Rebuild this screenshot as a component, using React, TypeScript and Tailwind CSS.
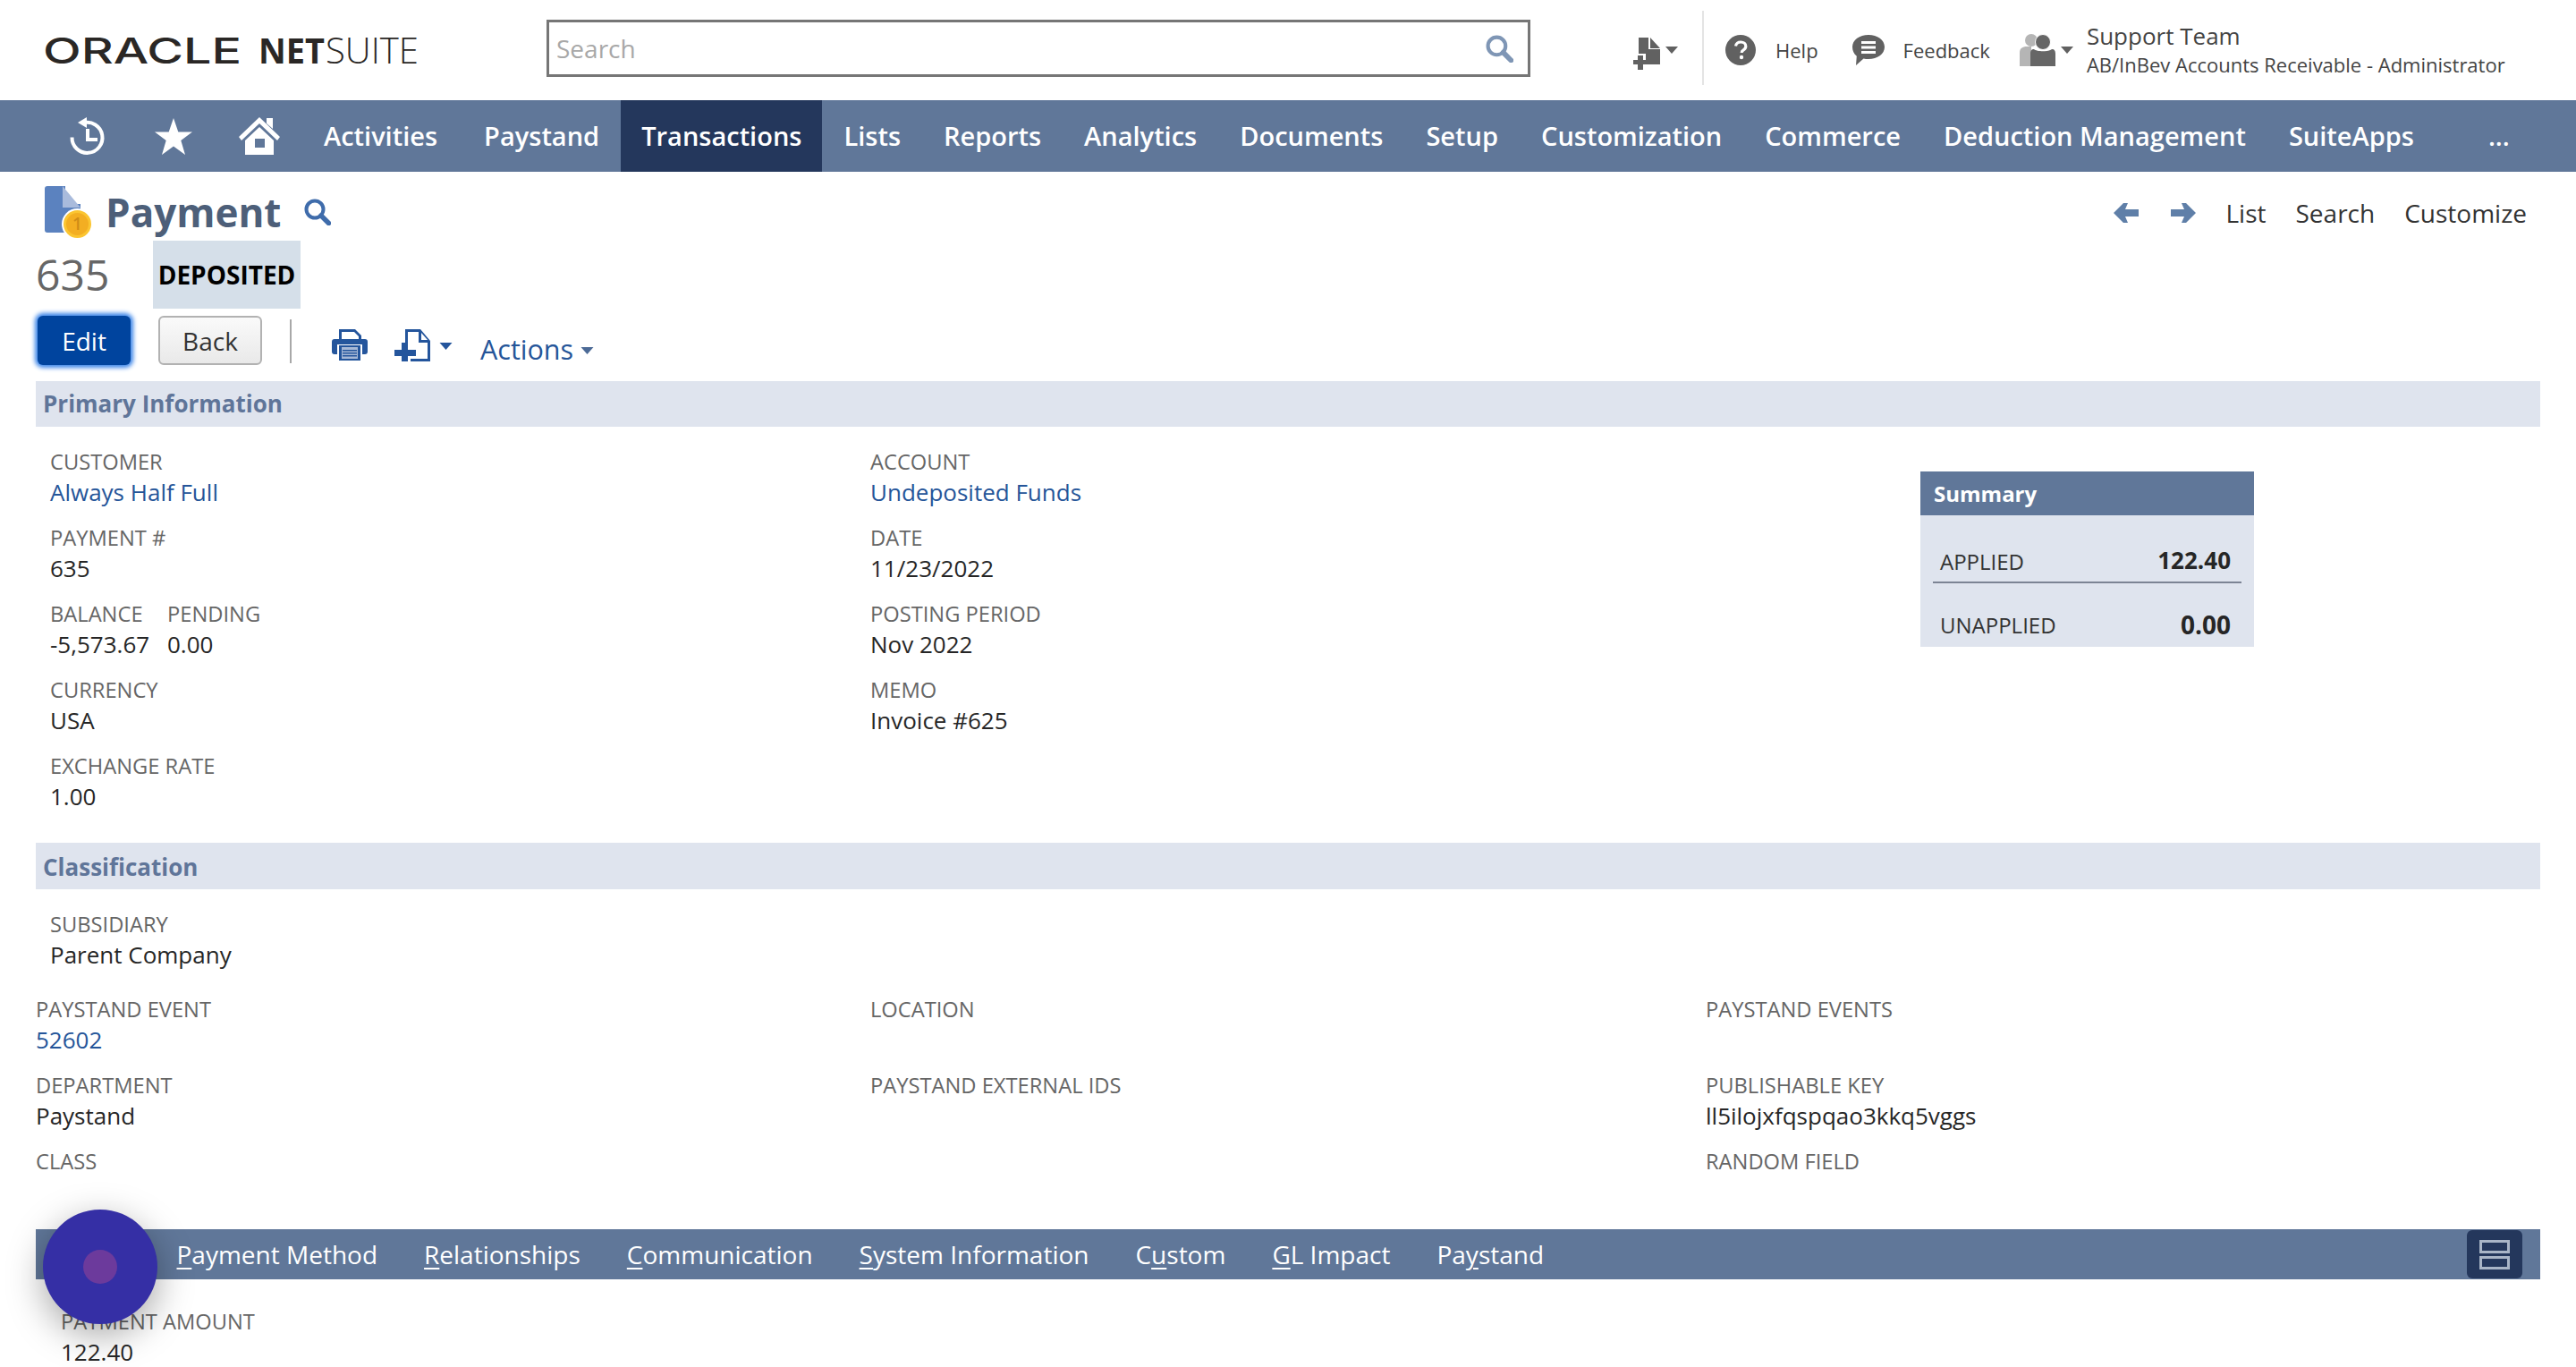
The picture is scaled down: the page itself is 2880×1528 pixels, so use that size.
import type { ReactNode } from "react";

const navItems = ["Lists", "Reports", "Analytics", "Documents", "Setup", "Customization", "Commerce", "Deduction Management", "SuiteApps"];

const tabs: [string, string, string][] = [
  ["", "P", "ayment Method"],
  ["", "R", "elationships"],
  ["", "C", "ommunication"],
  ["", "S", "ystem Information"],
  ["C", "u", "stom"],
  ["", "G", "L Impact"],
  ["Pa", "y", "stand"],
];

function Caret({ className }: { className: string }) {
  return (
    <svg viewBox="0 0 14 8" className={className} fill="currentColor">
      <path d="M0 0h14L7 8z" />
    </svg>
  );
}

function Field({ label, children, className = "" }: { label: string; children?: ReactNode; className?: string }) {
  return (
    <div className={`h-[85px] ${className}`}>
      <div className="text-[23.7px] leading-[34px] text-[#666666]">{label}</div>
      <div className="text-[26px] leading-[35px] text-[#262626]">{children}</div>
    </div>
  );
}

function FieldLink({ children }: { children: ReactNode }) {
  return <span className="text-[#255599]">{children}</span>;
}

function SectionBar({ title, className }: { title: string; className: string }) {
  return (
    <div className={`flex items-center bg-[#dfe4ee] pl-2 text-[26px] font-bold text-[#5f7599] ${className}`}>{title}</div>
  );
}

function Logo() {
  return (
    <svg viewBox="0 0 424 50" className="ml-[46px] h-[50px] w-[424px] shrink-0 overflow-visible" fill="#2a2725">
      <text x="2" y="40" fontFamily="Inter, sans-serif" fontSize="40" fontWeight="500" textLength="222" lengthAdjust="spacingAndGlyphs">
        ORACLE
      </text>
      <text x="243" y="40" fontFamily="'Open Sans', sans-serif" fontSize="40" fontWeight="700" textLength="74" lengthAdjust="spacingAndGlyphs">
        NET
      </text>
      <text x="318" y="40" fontFamily="'Open Sans', sans-serif" fontSize="40" fontWeight="300" textLength="104" lengthAdjust="spacingAndGlyphs">
        SUITE
      </text>
    </svg>
  );
}

function HeaderNewIcon() {
  return (
    <svg viewBox="0 0 31 36" className="h-[36px] w-[31px]" fill="#616161">
      <path d="M6 0h11v13H6z" />
      <path d="M19 0l11 12H19z" />
      <path d="M6 13h24v17H6z" />
      <rect x="0" y="18" width="14" height="18" fill="#fff" />
      <rect x="0" y="25" width="16" height="5" />
      <rect x="5" y="20" width="6" height="16" />
    </svg>
  );
}

function HelpIcon() {
  return (
    <svg viewBox="0 0 34 34" className="h-[34px] w-[34px]">
      <circle cx="17" cy="17" r="17" fill="#616161" />
      <path d="M11.500 12.500c.6-3 2.800-4.500 5.700-4.500 3.200 0 5.600 1.900 5.600 4.700 0 2.200-1.200 3.300-2.900 4.400-1.300.8-1.700 1.400-1.700 2.900" fill="none" stroke="#fff" strokeWidth="3.200" />
      <circle cx="18" cy="25" r="2.200" fill="#fff" />
    </svg>
  );
}

function FeedbackIcon() {
  return (
    <svg viewBox="0 0 36 34" className="h-[34px] w-[36px]">
      <path d="M18 0c10 0 18 5.700 18 13.500S28 27 18 27c-2 0-4-.2-5.500-.6L4 34l.8-10.300C1.800 21.200 0 17.600 0 13.500 0 5.700 8 0 18 0z" fill="#616161" />
      <path d="M10 7h16v3H10zM10 12.500h16v3H10zM10 18h16v3H10z" fill="#fff" />
    </svg>
  );
}

function TeamIcon() {
  return (
    <svg viewBox="0 0 40 36" className="h-[36px] w-[40px]">
      <circle cx="13" cy="7" r="7" fill="#b5b5b5" />
      <path d="M0 36V21c0-5 3-7 8-7h5v22z" fill="#b5b5b5" />
      <circle cx="26" cy="9" r="8.500" fill="#666666" stroke="#fff" strokeWidth="1" />
      <path d="M12 36V22c0-3 1-5 4-5 3 3 17 3 20 0 3 0 4 2 4 5v14z" fill="#666666" />
    </svg>
  );
}

function HistoryIcon() {
  return (
    <svg viewBox="0 0 40 43" className="h-[43px] w-[40px]" fill="none" stroke="#fff">
      <path d="M15 6.500a17 17 0 1 1-12.500 16" strokeWidth="4" />
      <path d="M19 0v12L9 6z" fill="#fff" stroke="none" />
      <path d="M20 13v12h11" strokeWidth="4" />
    </svg>
  );
}

function StarIcon() {
  return (
    <svg viewBox="0 0 42 41" className="h-[41px] w-[42px]" fill="#fff">
      <path d="M21 0l5.300 15.400H42L29.300 25.100 34 41 21 31.400 8 41l4.700-15.900L0 15.400h15.700z" />
    </svg>
  );
}

function HomeIcon() {
  return (
    <svg viewBox="0 0 46 42" className="h-[42px] w-[46px]" fill="#fff">
      <path d="M31 1h7v12l-7-6z" />
      <path d="M23 0l23 22-3 4L23 7 3 26l-3-4z" />
      <path fillRule="evenodd" d="M23 11l16 15v16H7V26zM18 24v10h11V24z" />
    </svg>
  );
}

function SearchGlass({ className, color }: { className: string; color: string }) {
  return (
    <svg viewBox="0 0 30 30" className={className} fill="none" stroke={color}>
      <circle cx="12" cy="12" r="9.500" strokeWidth="4" />
      <path d="M19 19l8.500 8.500" strokeWidth="5.500" strokeLinecap="round" />
    </svg>
  );
}

function PageIcon() {
  return (
    <div className="relative ml-[10px] h-[58px] w-[52px] shrink-0">
      <svg viewBox="0 0 40 52" className="h-[52px] w-[40px]">
        <path d="M3 0h20v20h17v29a3 3 0 0 1-3 3H3a3 3 0 0 1-3-3V3a3 3 0 0 1 3-3z" fill="#5b82bf" />
        <path d="M20 0l20 24H20z" fill="#a9bbdc" />
      </svg>
      <div className="absolute left-[21px] top-[27px] flex h-[31px] w-[31px] items-center justify-center rounded-full border-[3px] border-[#fbc531] bg-[#f3ae22] text-[19px] font-semibold leading-none text-[#cf8c17] ring-2 ring-white">
        1
      </div>
    </div>
  );
}

function PrintIcon() {
  return (
    <svg viewBox="0 0 40 35" className="h-[35px] w-[40px]" fill="#24559c">
      <path d="M8 0h18l7 7v7H8zM11 3v9h19V8l-5-5z" fillRule="evenodd" />
      <path d="M3 11h34a3 3 0 0 1 3 3v11a3 3 0 0 1-3 3h-3V17H6v11H3a3 3 0 0 1-3-3V14a3 3 0 0 1 3-3z" />
      <path d="M8 18h24v17H8z" />
      <path d="M11 20h18v13H11z" fill="#a6b8d6" />
      <path d="M12 23h16v1.500H12zM12 26h16v1.500H12zM12 29h16v1.500H12z" fill="#24559c" />
    </svg>
  );
}

function NewIcon() {
  return (
    <svg viewBox="0 0 40 36" className="h-[36px] w-[40px]" fill="#24559c">
      <path d="M12 0h17l11 13v23H18v-3h19V15H27V3H15v13h-3zM30 4v8h7z" fillRule="evenodd" />
      <path d="M8 15h7v8h9v7h-9v6H8v-6H0v-7h8z" />
    </svg>
  );
}

export default function App() {
  return (
    <div className="relative h-[1528px] w-[2880px] overflow-hidden bg-white font-['Open_Sans',sans-serif] text-[#333333]">
      <header className="flex h-[112px] items-center">
        <Logo />
        <div className="mb-[4px] ml-[141px] flex h-[64px] w-[1100px] shrink-0 items-center border-[3px] border-[#767676] pl-[8px] pr-[16px]">
          <span className="flex-1 text-[28px] text-[#a8a8a8]">Search</span>
          <SearchGlass className="h-[31px] w-[31px]" color="#7f96b5" />
        </div>
        <div className="ml-[115px] mt-[8px] flex items-center">
          <HeaderNewIcon />
          <Caret className="mb-[8px] ml-[5px] h-[8px] w-[14px] text-[#616161]" />
        </div>
        <div className="mb-[6px] ml-[27px] h-[83px] w-[2px] bg-[#e4e4e4]" />
        <div className="ml-[24px]">
          <HelpIcon />
        </div>
        <span className="ml-[22px] text-[22px] text-[#444444]">Help</span>
        <div className="ml-[38px]">
          <FeedbackIcon />
        </div>
        <span className="ml-[21px] text-[22px] text-[#444444]">Feedback</span>
        <div className="ml-[33px]">
          <TeamIcon />
        </div>
        <Caret className="ml-[6px] h-[8px] w-[14px] text-[#616161]" />
        <div className="ml-[15px] flex flex-col">
          <span className="text-[26px] leading-[32px] text-[#444444]">Support Team</span>
          <span className="text-[22px] leading-[32px] text-[#444444]">AB/InBev Accounts Receivable - Administrator</span>
        </div>
      </header>

      <nav className="flex h-[80px] items-center bg-[#607799] text-[29px] font-semibold text-white">
        <div className="ml-[78px]">
          <HistoryIcon />
        </div>
        <div className="ml-[55px]">
          <StarIcon />
        </div>
        <div className="ml-[52px]">
          <HomeIcon />
        </div>
        <span className="ml-[25px] pl-[24px] pr-[28px]">Activities</span>
        <span className="px-[24px]">Paystand</span>
        <span className="flex h-full items-center bg-[#24375c] px-[23px]">Transactions</span>
        {navItems.map((item) => (
          <span key={item} className="px-[24px]">
            {item}
          </span>
        ))}
        <span className="ml-[59px]">...</span>
      </nav>

      <main className="px-[40px]">
        <div className="flex h-[77px] items-center justify-between pt-[12px]">
          <div className="flex items-center">
            <PageIcon />
            <span className="ml-[16px] text-[44px] font-bold text-[#4d5f79]">Payment</span>
            <SearchGlass className="ml-[26px] h-[30px] w-[30px]" color="#3f6cab" />
          </div>
          <div className="mt-[3px] flex items-center pr-[15px] text-[28px]">
            <svg viewBox="0 0 29 24" className="h-[24px] w-[29px]" fill="#5f7fa8">
              <path d="M12 1h5l-3 7h15v8H14l3 7h-5L1 12z" />
            </svg>
            <svg viewBox="0 0 29 24" className="ml-[36px] h-[24px] w-[29px]" fill="#5f7fa8">
              <path d="M17 1h-5l3 7H0v8h15l-3 7h5l11-11z" />
            </svg>
            <span className="ml-[32px]">List</span>
            <span className="ml-[33px]">Search</span>
            <span className="ml-[33px]">Customize</span>
          </div>
        </div>

        <div className="flex h-[76px] items-center">
          <span className="w-[131px] text-[48px] leading-none text-[#666666]">635</span>
          <span className="flex h-full w-[165px] items-center justify-center bg-[#d5dfe9] text-[28px] font-bold text-black">
            DEPOSITED
          </span>
        </div>

        <div className="flex h-[81px] pl-[2px] pt-[8px]">
          <button className="h-[55px] w-[104px] rounded-[6px] bg-[#00449e] text-[28px] font-medium text-white shadow-[0_0_5px_3px_#3a84e8]">
            Edit
          </button>
          <button className="ml-[31px] h-[55px] w-[116px] rounded-[6px] border-2 border-[#b2b2b2] bg-gradient-to-b from-[#fafafa] to-[#e9e9e9] text-[28px] text-[#333333]">
            Back
          </button>
          <div className="ml-[31px] mt-[4px] h-[49px] w-[2px] bg-[#a8a8a8]" />
          <div className="ml-[45px] mt-[15px]">
            <PrintIcon />
          </div>
          <div className="ml-[30px] mt-[15px]">
            <NewIcon />
          </div>
          <Caret className="ml-[10px] mt-[30px] h-[8px] w-[15px] text-[#24559c]" />
          <div className="ml-[31px] flex items-center text-[30.5px] leading-[40px] text-[#255599]">
            Actions
            <Caret className="ml-[8px] mt-[4px] h-[8px] w-[15px] text-[#4c6a96]" />
          </div>
        </div>

        <SectionBar title="Primary Information" className="h-[51px]" />

        <div className="flex h-[465px]">
          <div className="w-[933px] pl-[16px] pt-[22px]">
            <Field label="CUSTOMER">
              <FieldLink>Always Half Full</FieldLink>
            </Field>
            <Field label="PAYMENT #">635</Field>
            <div className="flex">
              <Field label="BALANCE" className="w-[131px]">
                -5,573.67
              </Field>
              <Field label="PENDING">0.00</Field>
            </div>
            <Field label="CURRENCY">USA</Field>
            <Field label="EXCHANGE RATE">1.00</Field>
          </div>
          <div className="w-[1174px] pt-[22px]">
            <Field label="ACCOUNT">
              <FieldLink>Undeposited Funds</FieldLink>
            </Field>
            <Field label="DATE">11/23/2022</Field>
            <Field label="POSTING PERIOD">Nov 2022</Field>
            <Field label="MEMO">Invoice #625</Field>
          </div>
          <div className="mt-[50px] h-[196px] w-[373px] bg-[#dfe4ee]">
            <div className="flex h-[49px] items-center bg-[#607799] pl-[15px] text-[24px] font-bold text-white">Summary</div>
            <div className="mx-[14px] flex h-[76px] items-end justify-between border-b-2 border-[#7c8494] pb-[4px] pl-[8px] pr-[12px]">
              <span className="text-[24px] text-[#333333]">APPLIED</span>
              <span className="text-[26px] font-bold text-[#262626]">122.40</span>
            </div>
            <div className="mx-[14px] flex h-[69px] items-end justify-between pb-[4px] pl-[8px] pr-[12px]">
              <span className="text-[24px] text-[#333333]">UNAPPLIED</span>
              <span className="text-[28px] font-bold leading-[38px] text-[#262626]">0.00</span>
            </div>
          </div>
        </div>

        <SectionBar title="Classification" className="h-[52px] pt-[2px]" />

        <div className="pl-[16px] pt-[22px]">
          <Field label="SUBSIDIARY">Parent Company</Field>
        </div>
        <div className="mt-[10px] grid grid-cols-[933px_934px_1fr]">
          <Field label="PAYSTAND EVENT">
            <FieldLink>52602</FieldLink>
          </Field>
          <Field label="LOCATION" />
          <Field label="PAYSTAND EVENTS" />
          <Field label="DEPARTMENT">Paystand</Field>
          <Field label="PAYSTAND EXTERNAL IDS" />
          <Field label="PUBLISHABLE KEY">ll5ilojxfqspqao3kkq5vggs</Field>
          <Field label="CLASS" />
          <div />
          <Field label="RANDOM FIELD" />
        </div>

        <div className="mt-[8px] flex h-[56px] items-center bg-[#607799] pl-[157.5px] pr-[20px] text-[28px] text-white">
          {tabs.map(([before, key, after]) => (
            <span key={key + after} className="mr-[52px]">
              {before}
              <span className="underline decoration-2 underline-offset-4">{key}</span>
              {after}
            </span>
          ))}
          <div className="ml-auto flex h-[54px] w-[62px] flex-col items-center justify-center gap-[3px] rounded-[6px] bg-[#24375c]">
            <div className="h-[15px] w-[34px] border-[3px] border-[#a9b5c7]" />
            <div className="h-[15px] w-[34px] border-[3px] border-[#a9b5c7]" />
          </div>
        </div>

        <div className="pl-[28px] pt-[30px]">
          <Field label="PAYMENT AMOUNT">122.40</Field>
        </div>
      </main>

      <div className="absolute left-[48px] top-[1352px] flex h-[128px] w-[128px] items-center justify-center rounded-full bg-[#352fa5] shadow-[0_12px_40px_rgba(0,0,0,0.35)]">
        <div className="h-[38px] w-[38px] rounded-full bg-[#6c3a9c]" />
      </div>
    </div>
  );
}
